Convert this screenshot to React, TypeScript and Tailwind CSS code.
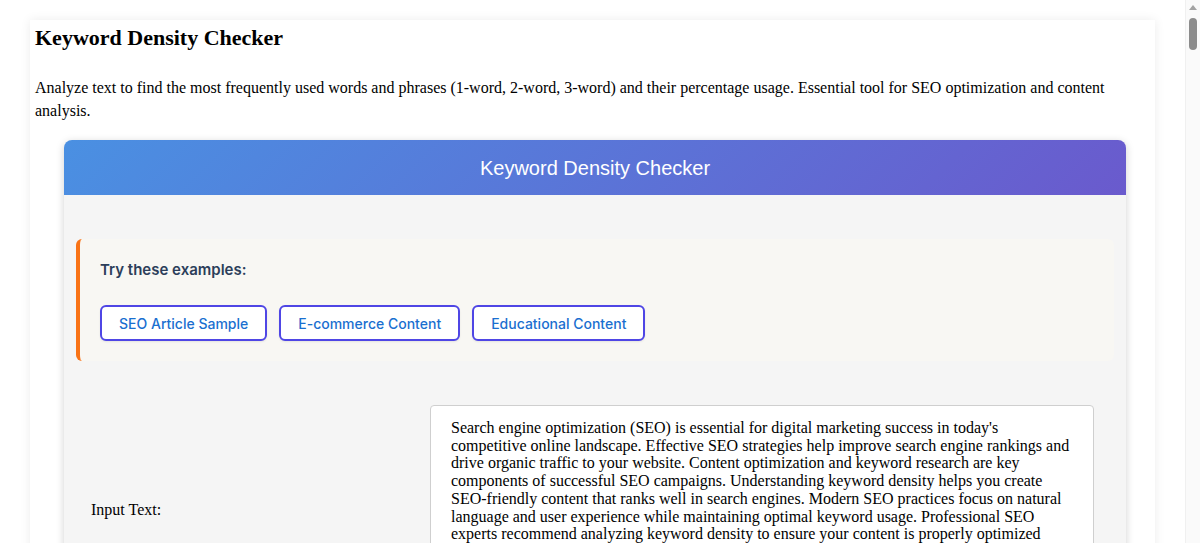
import React from "react";

const SAMPLE_TEXT =
  "Search engine optimization (SEO) is essential for digital marketing success in today's competitive online landscape. Effective SEO strategies help improve search engine rankings and drive organic traffic to your website. Content optimization and keyword research are key components of successful SEO campaigns. Understanding keyword density helps you create SEO-friendly content that ranks well in search engines. Modern SEO practices focus on natural language and user experience while maintaining optimal keyword usage. Professional SEO experts recommend analyzing keyword density to ensure your content is properly optimized without keyword stuffing. Quality content with strategic keyword placement remains the foundation of effective SEO.";

const EXAMPLES = ["SEO Article Sample", "E-commerce Content", "Educational Content"];

// browser-style vertical scrollbar seen in the screenshot
function Scrollbar() {
  return (
    <div className="sticky top-0 flex h-screen w-[15px] shrink-0 flex-col items-center border-l border-[#f0f0f0] bg-[#fafafa]">
      <div className="mt-[5px] h-0 w-0 border-x-[4px] border-b-[5px] border-x-transparent border-b-[#a3a3a3]" />
      <div className="mt-[8px] h-[32px] w-[8px] rounded-full bg-[#8c8c8c]" />
    </div>
  );
}

export default function App() {
  return (
    <div className="flex bg-white" style={{ fontFamily: '"Liberation Serif", serif' }}>
      <main className="min-w-0 flex-1 pt-[20px] pb-[40px]">
        <div className="mx-[30px] min-h-[8600px] bg-white p-[5px] shadow-[0_0_10px_rgba(0,0,0,0.08)]">
          <h2 className="mt-[1px] text-[22px] font-bold leading-[24px] text-black">Keyword Density Checker</h2>
          <p className="mt-[26px] text-[16px] leading-[23px] text-black">
            Analyze text to find the most frequently used words and phrases (1-word, 2-word, 3-word) and their
            percentage usage. Essential tool for SEO optimization and content analysis.
          </p>

          {/* tool card */}
          <div className="mt-[18px] ml-[29px] w-[1062px] overflow-hidden rounded-[8px] bg-[#f5f5f5] shadow-[0_2px_8px_rgba(0,0,0,0.18)]">
            <div className="flex h-[55px] items-center justify-center bg-[linear-gradient(135deg,#4a90e2_0%,#6a5acd_100%)]">
              <span className="text-[20px] text-white" style={{ fontFamily: '"Liberation Sans", Arial, sans-serif' }}>
                Keyword Density Checker
              </span>
            </div>

            <div className="px-[12px] pt-[44px] pb-[40px]">
              <div
                className="rounded-[6px] border-l-4 border-[#f97316] bg-[#f8f7f3] p-[20px]"
                style={{ fontFamily: "Inter, sans-serif" }}
              >
                <div className="text-[15px] font-semibold leading-[22px] text-[#2c3e5a]">Try these examples:</div>
                <div className="mt-[24px] flex gap-[12px]">
                  {EXAMPLES.map((e) => (
                    <button
                      key={e}
                      className="h-[36px] rounded-[6px] border-2 border-[#4f46e5] bg-white px-[17px] text-[14px] font-medium text-[#1a6fd0] shadow-[0_1px_2px_rgba(0,0,0,0.08)]"
                    >
                      {e}
                    </button>
                  ))}
                </div>
              </div>

              <div className="mt-[44px] grid grid-cols-[354px_664px] items-center">
                <label className="pl-[15px] text-[16px] text-black">Input Text:</label>
                <textarea
                  readOnly
                  value={SAMPLE_TEXT}
                  className="h-[210px] resize-none rounded-[4px] border border-[#cfcfcf] bg-white px-[20px] pt-[13px] pb-[11px] text-[16px] leading-[17.7px] text-black outline-none"
                  style={{ fontFamily: '"Liberation Serif", serif' }}
                />
              </div>

              <div className="mt-[20px] flex justify-center">
                <button className="rounded-[6px] bg-[#4a90e2] px-[24px] py-[10px] text-[16px] text-white">
                  Analyze Density
                </button>
              </div>
            </div>
          </div>
        </div>
      </main>
      <Scrollbar />
    </div>
  );
}
